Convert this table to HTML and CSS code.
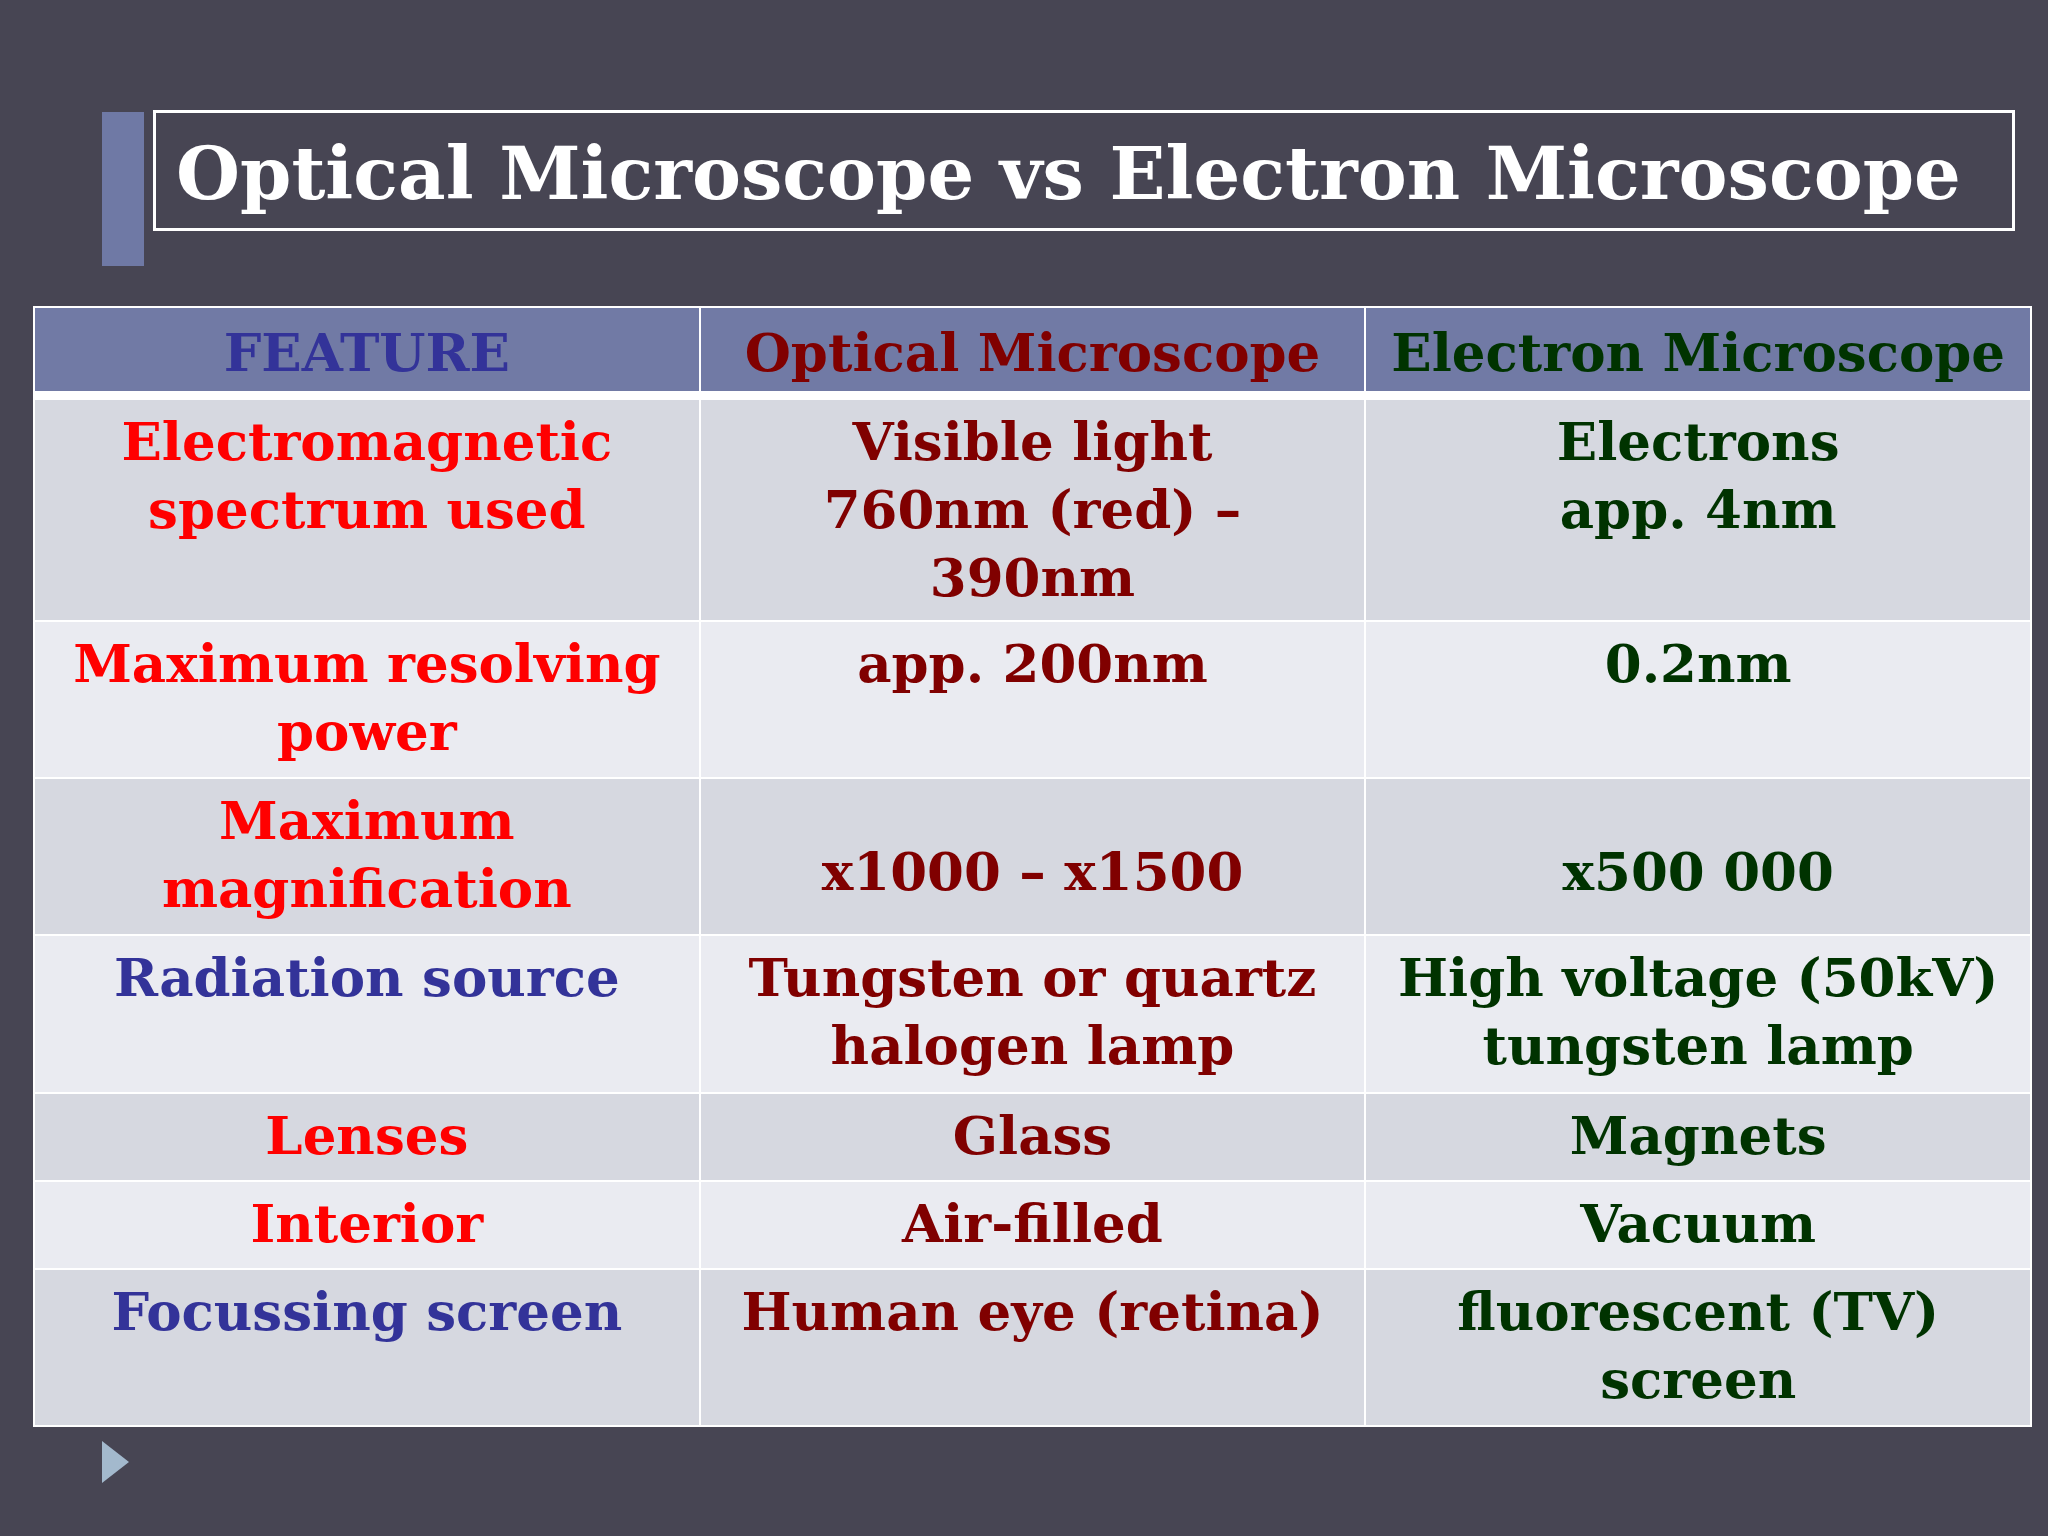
FILE: index.html
```html
<!DOCTYPE html>
<html lang="en">
<head>
<meta charset="utf-8">
<title>Optical Microscope vs Electron Microscope</title>
<link rel="stylesheet" href="styles.css">
</head>
<body>
<div class="slide">
  <header class="title-row">
    <div class="accent-bar"></div>
    <h1 class="title-box">Optical Microscope vs Electron Microscope</h1>
  </header>

  <div class="table">
    <div class="row head">
      <div class="cell c-blue">FEATURE</div>
      <div class="cell c-maroon">Optical Microscope</div>
      <div class="cell c-green">Electron Microscope</div>
    </div>
    <div class="row odd r-tall">
      <div class="cell c-red">Electromagnetic<br>spectrum used</div>
      <div class="cell c-maroon">Visible light<br>760nm (red) –<br>390nm</div>
      <div class="cell c-green">Electrons<br>app. 4nm</div>
    </div>
    <div class="row even r-mid">
      <div class="cell c-red">Maximum resolving<br>power</div>
      <div class="cell c-maroon">app. 200nm</div>
      <div class="cell c-green">0.2nm</div>
    </div>
    <div class="row odd r-mid">
      <div class="cell c-red">Maximum<br>magnification</div>
      <div class="cell c-maroon low">x1000 – x1500</div>
      <div class="cell c-green low">x500 000</div>
    </div>
    <div class="row even r-mid4">
      <div class="cell c-blue">Radiation source</div>
      <div class="cell c-maroon">Tungsten or quartz<br>halogen lamp</div>
      <div class="cell c-green">High voltage (50kV)<br>tungsten lamp</div>
    </div>
    <div class="row odd r-short">
      <div class="cell c-red">Lenses</div>
      <div class="cell c-maroon">Glass</div>
      <div class="cell c-green">Magnets</div>
    </div>
    <div class="row even r-short">
      <div class="cell c-red">Interior</div>
      <div class="cell c-maroon">Air-filled</div>
      <div class="cell c-green">Vacuum</div>
    </div>
    <div class="row odd r-mid">
      <div class="cell c-blue">Focussing screen</div>
      <div class="cell c-maroon">Human eye (retina)</div>
      <div class="cell c-green">fluorescent (TV)<br>screen</div>
    </div>
  </div>

  <div class="bullet"></div>
</div>
</body>
</html>
```

FILE: styles.css
```css
html, body {
  margin: 0;
  padding: 0;
}

body {
  background: #474553;
  width: 2048px;
  height: 1536px;
  overflow: hidden;
  font-family: "DejaVu Serif", "Liberation Serif", serif;
  font-weight: bold;
}

.slide {
  padding: 110px 0 0 33px;
  display: flex;
  flex-direction: column;
  align-items: flex-start;
}

.title-row {
  display: flex;
  align-items: flex-start;
  margin-left: 69px;
}

.accent-bar {
  width: 42px;
  height: 154px;
  margin-top: 2px;
  background: #6f79a5;
  margin-right: 9px;
}

.title-box {
  margin: 0;
  box-sizing: border-box;
  width: 1862px;
  height: 121px;
  border: 3px solid #ffffff;
  padding: 10px 0 0 20px;
  color: #ffffff;
  font-size: 73.5px;
  line-height: 100px;
  font-weight: bold;
  white-space: nowrap;
}

.table {
  margin-top: 40px;
  width: 1999px;
  box-sizing: border-box;
  background: #ffffff;
  padding: 2px;
  display: flex;
  flex-direction: column;
  gap: 2px;
}

.row {
  display: grid;
  grid-template-columns: 1fr 1fr 1fr;
  gap: 2px;
}

.row.head {
  height: 83px;
  margin-bottom: 7px;
}

.r-tall { height: 220px; }
.r-mid { height: 155px; }
.r-mid4 { height: 156px; }
.r-short { height: 86px; }

.cell {
  text-align: center;
  font-size: 53px;
  line-height: 68px;
  padding-top: 7px;
  white-space: nowrap;
  overflow: hidden;
}

.head .cell {
  background: #717aa5;
  padding-top: 10px;
}

.odd .cell { background: #d6d8e0; }
.even .cell { background: #eaebf1; }

.cell.low { padding-top: 58px; }

.c-blue { color: #333399; }
.c-red { color: #ff0000; }
.c-maroon { color: #800000; }
.c-green { color: #003300; }

.bullet {
  margin-top: 14px;
  margin-left: 69px;
  width: 0;
  height: 0;
  border-top: 21px solid transparent;
  border-bottom: 21px solid transparent;
  border-left: 27px solid #a3b9cd;
}
```
